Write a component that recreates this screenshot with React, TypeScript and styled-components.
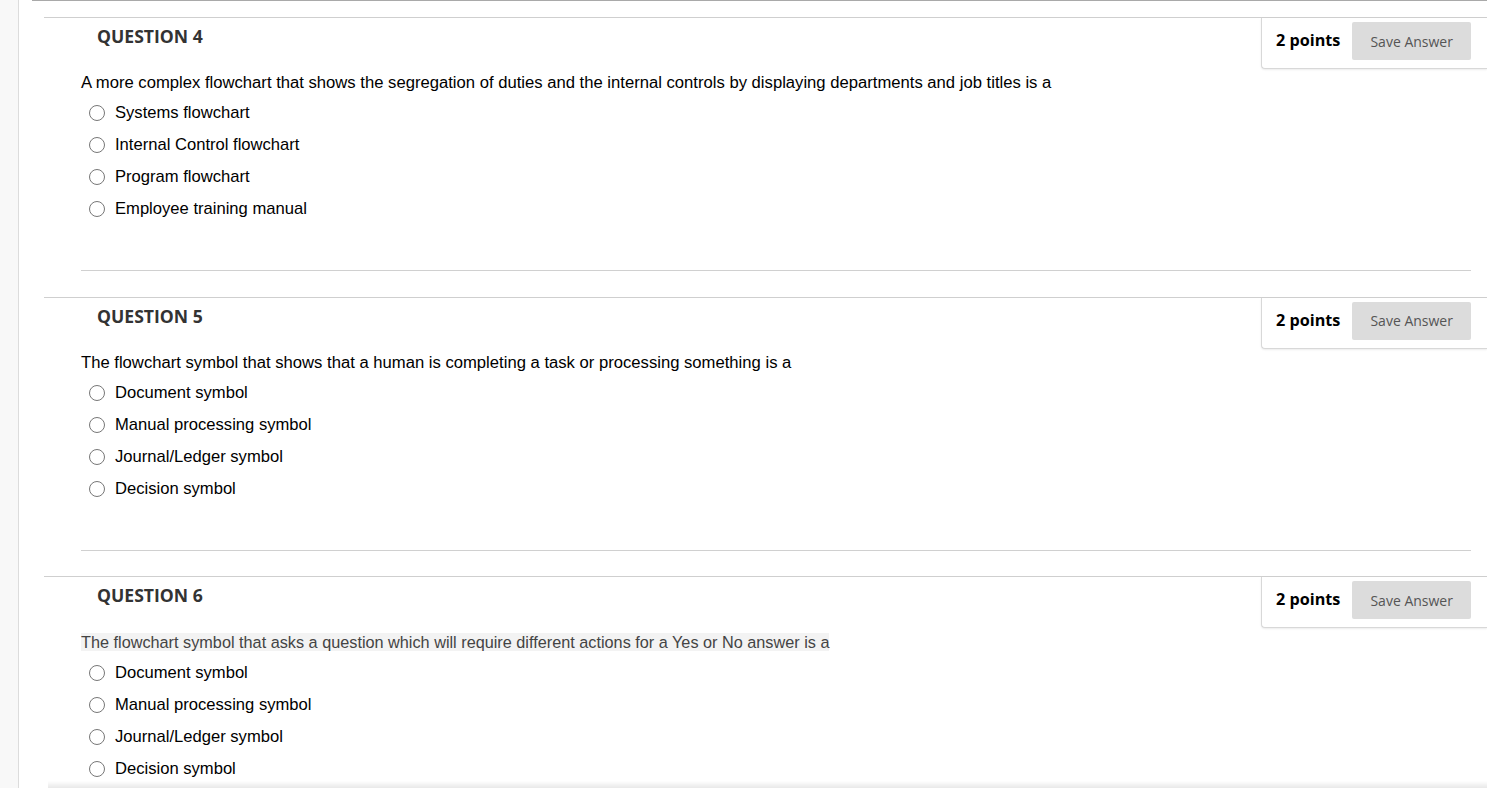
import React from "react";
import styled, { createGlobalStyle } from "styled-components";

const GlobalStyle = createGlobalStyle`
  html, body {
    margin: 0;
    padding: 0;
    height: 788px;
    overflow: hidden;
    background: #ffffff;
  }
  * { box-sizing: border-box; }
`;

const Page = styled.div`
  display: flex;
  height: 788px;
`;

const LeftRail = styled.div`
  width: 19px;
  flex: none;
  background: #f8f8f8;
  border-right: 1px solid #dcdcdc;
`;

const Main = styled.main`
  flex: 1;
  padding-left: 13px;
  min-width: 0;
`;

const TopRule = styled.div`
  border-top: 1px solid #a9a9a9;
`;

const List = styled.div`
  margin-left: 12px;
  padding-top: 16px;
`;

const Section = styled.section`
  border-top: 1px solid #cfcfcf;
`;

const Header = styled.div`
  display: flex;
  justify-content: space-between;
  align-items: flex-start;
  height: 51px;
`;

const Title = styled.h2`
  margin: 0;
  padding: 7px 0 0 53px;
  font-family: "Open Sans", "Liberation Sans", sans-serif;
  font-weight: 700;
  font-size: 17.6px;
  line-height: 23px;
  color: #333333;
`;

const PointsBox = styled.div`
  width: 226px;
  height: 51px;
  display: flex;
  align-items: flex-start;
  padding: 4px 16px 0 14px;
  gap: 12px;
  background: #ffffff;
  border-left: 1px solid #d8d8d8;
  border-bottom: 1px solid #d8d8d8;
  border-bottom-left-radius: 4px;
  box-shadow: 0 1px 2px rgba(0, 0, 0, 0.08);
`;

const Points = styled.span`
  font-family: "Open Sans", "Liberation Sans", sans-serif;
  font-weight: 700;
  font-size: 16.2px;
  line-height: 37px;
  color: #000000;
  white-space: nowrap;
`;

const SaveButton = styled.button`
  width: 119px;
  height: 38px;
  border: none;
  border-radius: 2px;
  background: #dcdcdc;
  color: #555555;
  font-family: "Open Sans", "Liberation Sans", sans-serif;
  font-size: 14px;
  padding: 0;
  cursor: pointer;
`;

const Prompt = styled.p`
  margin: 4px 0 0 37px;
  font-family: "Liberation Sans", Arial, sans-serif;
  font-size: 16.65px;
  line-height: 20px;
  color: #000000;
`;

const Shaded = styled.span`
  background: #f3f3f3;
  color: #444444;
  font-size: 16.25px;
`;

const Options = styled.ul`
  list-style: none;
  margin: 4px 0 0 0;
  padding: 0 0 0 45px;
`;

const Option = styled.li`
  display: flex;
  align-items: center;
  height: 32px;
  gap: 10px;
  font-family: "Liberation Sans", Arial, sans-serif;
  font-size: 16.6px;
  color: #000000;
`;

const Radio = styled.span`
  width: 16px;
  height: 16px;
  border-radius: 50%;
  border: 1.5px solid #777777;
  background: #ffffff;
  flex: none;
`;

const Separator = styled.hr`
  margin: 45px 16px 25.5px 37px;
  border: none;
  border-top: 1px solid #d0d0d0;
  height: 0;
`;

const BottomShade = styled.div`
  position: fixed;
  left: 48px;
  right: 0;
  bottom: 0;
  height: 7px;
  background: linear-gradient(to bottom, rgba(0, 0, 0, 0), rgba(0, 0, 0, 0.09));
  pointer-events: none;
`;

type Question = {
  n: number;
  text: string;
  options: string[];
  shaded?: boolean;
};

const questions: Question[] = [
  {
    n: 4,
    text:
      "A more complex flowchart that shows the segregation of duties and the internal controls by displaying departments and job titles is a",
    options: [
      "Systems flowchart",
      "Internal Control flowchart",
      "Program flowchart",
      "Employee training manual",
    ],
  },
  {
    n: 5,
    text:
      "The flowchart symbol that shows that a human is completing a task or processing something is a",
    options: [
      "Document symbol",
      "Manual processing symbol",
      "Journal/Ledger symbol",
      "Decision symbol",
    ],
  },
  {
    n: 6,
    text:
      "The flowchart symbol that asks a question which will require different actions for a Yes or No answer is a",
    options: [
      "Document symbol",
      "Manual processing symbol",
      "Journal/Ledger symbol",
      "Decision symbol",
    ],
    shaded: true,
  },
];

export default function App() {
  return (
    <>
      <GlobalStyle />
      <Page>
        <LeftRail />
        <Main>
          <TopRule />
          <List>
            {questions.map((q, i) => (
              <Section key={q.n}>
                <Header>
                  <Title>QUESTION {q.n}</Title>
                  <PointsBox>
                    <Points>2 points</Points>
                    <SaveButton>Save Answer</SaveButton>
                  </PointsBox>
                </Header>
                <Prompt>
                  {q.shaded ? <Shaded>{q.text}</Shaded> : q.text}
                </Prompt>
                <Options>
                  {q.options.map((o) => (
                    <Option key={o}>
                      <Radio />
                      {o}
                    </Option>
                  ))}
                </Options>
                {i < questions.length - 1 && <Separator />}
              </Section>
            ))}
          </List>
        </Main>
      </Page>
      <BottomShade />
    </>
  );
}
